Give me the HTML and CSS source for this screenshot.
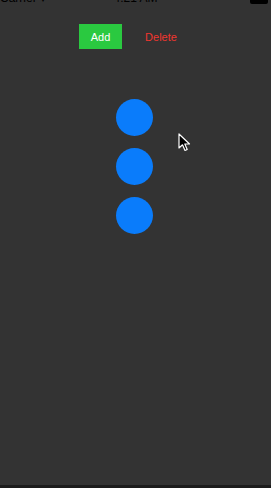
FILE: index.html
```html
<!DOCTYPE html>
<html>
<head>
<title>Add / Delete</title>
<link rel="stylesheet" href="styles.css">
</head>
<body>
<div class="screen">
  <div class="status">
    <span class="carrier">Carrier &#x25BE;</span>
    <span class="clock">4:21 AM</span>
    <span class="battery"></span>
  </div>
  <div class="toolbar">
    <button class="btn-add">Add</button>
    <button class="btn-delete">Delete</button>
  </div>
  <div class="dots">
    <div class="dot"></div>
    <div class="dot"></div>
    <div class="dot"></div>
  </div>
  <svg class="cursor" width="14" height="20" viewBox="0 0 14 20">
    <path d="M1 1 L1 15 L4.5 11.8 L7 17.5 L9.2 16.5 L6.8 11 L11.5 11 Z" fill="#000" stroke="#fff" stroke-width="1.2" stroke-linejoin="round"/>
  </svg>
  <div class="bottom"></div>
</div>
</body>
</html>
```

FILE: styles.css
```css
html, body {
 margin: 0;
 padding: 0;
 background: #333333;
}

.screen {
 position: relative;
 width: 271px;
 height: 488px;
 display: flex;
 flex-direction: column;
 font-family: "Liberation Sans", Arial, sans-serif;
 overflow: hidden;
}

/* status bar, only its lower edge is on screen */
.status {
 height: 4px;
 overflow: hidden;
 display: grid;
 grid-template-columns: 1fr auto 1fr;
 color: #000;
 font-size: 12px;
 line-height: 12px;
 padding: 0 3px 0 0;
}
.status span {
 display: block;
 height: 12px;
 margin-top: -8px;
 white-space: nowrap;
}
.clock { margin-left: 3px; }
.battery {
 justify-self: end;
 width: 18px;
 background: #000;
 border-radius: 2px;
}

.toolbar {
 display: flex;
 align-items: center;
 margin: 20px 0 0 79px;
 gap: 12px;
}
.toolbar button {
 border: 0;
 font-family: inherit;
 font-size: 11px;
 padding: 0;
 height: 25px;
 cursor: pointer;
}
.btn-add {
 width: 43px;
 background: #2ac940;
 color: #fff;
}
.btn-delete {
 width: 54px;
 background: transparent;
 color: #f2362f;
}

.dots {
 display: flex;
 flex-direction: column;
 align-items: center;
 gap: 12px;
 margin: 50px 0 0 -2px;
}
.dot {
 width: 37px;
 height: 37px;
 border-radius: 50%;
 background: #0a7cfb;
}

.cursor {
 position: absolute;
 left: 178px;
 top: 133px;
}

.bottom {
 margin-top: auto;
 height: 3px;
 background: #1c1c1c;
}
```
